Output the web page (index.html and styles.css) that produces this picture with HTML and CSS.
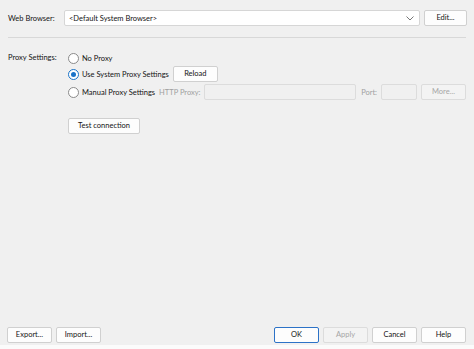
FILE: index.html
```html
<!DOCTYPE html>
<html>
<head>
<meta charset="utf-8">
<link rel="stylesheet" href="styles.css">
</head>
<body>
<div class="panel">
  <div class="row browser-row">
    <span class="label">Web Browser:</span>
    <div class="combo">
      <span class="combo-text">&lt;Default System Browser&gt;</span>
      <svg class="chev" width="8" height="5" viewBox="0 0 8 5"><path d="M0.5 0.5 L4 4 L7.5 0.5" fill="none" stroke="#777" stroke-width="1"/></svg>
    </div>
    <button class="btn edit">Edit...</button>
  </div>
  <div class="sep"></div>
  <div class="proxy">
    <span class="label plabel">Proxy Settings:</span>
    <div class="options">
      <div class="opt opt1"><span class="radio"></span><span>No Proxy</span></div>
      <div class="opt opt2"><span class="radio checked"></span><span>Use System Proxy Settings</span><button class="btn reload">Reload</button></div>
      <div class="opt opt3"><span class="radio"></span><span>Manual Proxy Settings</span>
        <span class="dim http">HTTP Proxy:</span><span class="field host"></span>
        <span class="dim port">Port:</span><span class="field portf"></span>
        <button class="btn disabled more">More...</button>
      </div>
      <button class="btn test">Test connection</button>
    </div>
  </div>
  <div class="footer">
    <button class="btn w45">Export...</button>
    <button class="btn w45">Import...</button>
    <span class="spacer"></span>
    <button class="btn w45 default">OK</button>
    <button class="btn w45 disabled">Apply</button>
    <button class="btn w45">Cancel</button>
    <button class="btn w45">Help</button>
  </div>
</div>
<div class="bottom"></div>
</body>
</html>
```
FILE: styles.css
```css
html, body {
  margin: 0;
  padding: 0;
  background: #ffffff;
}
body {
  width: 474px;
  height: 349px;
  overflow: hidden;
  font-family: "Lato", "Noto Sans", sans-serif;
  font-size: 7.5px;
  color: #141414;
}
.panel {
  box-sizing: border-box;
  height: 345px;
  background: #f0f0f0;
  padding: 10px 7px 2px 7px;
  display: flex;
  flex-direction: column;
}
.row {
  display: flex;
  align-items: center;
}
.label {
  width: 56px;
  flex: none;
  padding-left: 1px;
  white-space: nowrap;
}
.combo {
  box-sizing: border-box;
  width: 356px;
  height: 16px;
  background: #ffffff;
  border: 1px solid #d6d6d6;
  border-radius: 2px;
  display: flex;
  align-items: center;
  padding: 0 5px 0 4px;
}
.combo-text { flex: 1; }
.chev { flex: none; }
.btn {
  box-sizing: border-box;
  height: 16px;
  background: #fdfdfd;
  border: 1px solid #d0d0d0;
  border-radius: 2px;
  font-family: inherit;
  font-size: 7.5px;
  color: #141414;
  padding: 0;
  line-height: 14px;
}
.edit { width: 43px; margin-left: 4px; }
.sep {
  height: 1px;
  background: #d8d8d8;
  margin: 11px 1px 0 1px;
}
.proxy {
  display: flex;
  margin-top: 13px;
}
.plabel {
  height: 14px;
  line-height: 14px;
  width: 60px;
}
.options {
  display: flex;
  flex-direction: column;
  align-items: flex-start;
  width: 398px;
}
.opt {
  display: flex;
  align-items: center;
  white-space: nowrap;
}
.opt1 { height: 14px; }
.opt2 { height: 16px; margin-top: 1px; }
.opt3 { height: 16px; margin-top: 2px; align-self: stretch; }
.radio {
  box-sizing: border-box;
  width: 11px;
  height: 11px;
  border-radius: 50%;
  border: 1px solid #8a8a8a;
  background: #ffffff;
  margin-right: 3px;
  flex: none;
  position: relative;
}
.radio.checked {
  border-color: #1a73c8;
}
.radio.checked::after {
  content: "";
  position: absolute;
  left: 2px;
  top: 2px;
  width: 5px;
  height: 5px;
  border-radius: 50%;
  background: #1a73c8;
}
.reload { width: 45px; margin-left: 4px; }
.dim { color: #a0a0a0; }
.http { margin-left: 4px; }
.field {
  box-sizing: border-box;
  height: 16px;
  border: 1px solid #dcdcdc;
  background: #f0f0f0;
  border-radius: 2px;
}
.host { flex: 1; margin-left: 4px; }
.port { margin-left: 5px; }
.portf { width: 36px; margin-left: 4px; flex: none; }
.btn.disabled {
  background: #f3f3f3;
  border-color: #dcdcdc;
  color: #a6a6a6;
}
.more { width: 45px; margin-left: 4px; flex: none; }
.test { width: 72px; margin-top: 18px; }
.footer {
  margin-top: auto;
  display: flex;
  align-items: center;
  gap: 4px;
  padding-left: 0;
  padding-right: 1px;
}
.spacer { flex: 1; }
.w45 { width: 45px; }
.btn.default {
  border: 1px solid #2c72c7;
}
.bottom {
  height: 4px;
  background: #fbfbfb;
}
```
